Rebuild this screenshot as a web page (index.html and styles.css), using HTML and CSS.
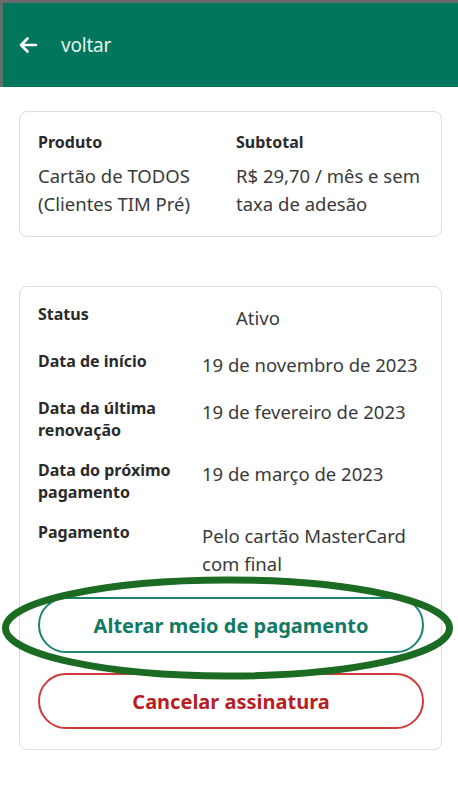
FILE: index.html
```html
<!DOCTYPE html>
<html lang="pt-BR">
<head>
<meta charset="utf-8">
<title>Assinatura</title>
<link rel="stylesheet" href="styles.css">
</head>
<body>
<div class="frame">
  <header class="topbar">
    <svg class="back" width="20" height="18" viewBox="0 0 20 18" aria-hidden="true">
      <path d="M18 9H3M9.5 2.5L3 9l6.5 6.5" fill="none" stroke="#ffffff" stroke-width="2.6" stroke-linecap="round" stroke-linejoin="round"/>
    </svg>
    <span class="back-label">voltar</span>
  </header>

  <main class="content">
    <section class="card summary">
      <div class="col">
        <div class="label">Produto</div>
        <div class="value">Cartão de TODOS<br>(Clientes TIM Pré)</div>
      </div>
      <div class="col">
        <div class="label">Subtotal</div>
        <div class="value">R$ 29,70 / mês e sem<br>taxa de adesão</div>
      </div>
    </section>

    <section class="card details">
      <div class="row status">
        <div class="label">Status</div>
        <div class="value">Ativo</div>
      </div>
      <div class="row">
        <div class="label">Data de início</div>
        <div class="value">19 de novembro de 2023</div>
      </div>
      <div class="row">
        <div class="label">Data da última<br>renovação</div>
        <div class="value">19 de fevereiro de 2023</div>
      </div>
      <div class="row">
        <div class="label">Data do próximo<br>pagamento</div>
        <div class="value">19 de março de 2023</div>
      </div>
      <div class="row last">
        <div class="label">Pagamento</div>
        <div class="value">Pelo cartão MasterCard<br>com final</div>
      </div>

      <div class="actions">
        <button class="btn btn-primary">Alterar meio de pagamento</button>
        <button class="btn btn-danger">Cancelar assinatura</button>
      </div>
    </section>
    <div class="next-card"></div>
  </main>

  <svg class="highlight" width="458" height="110" viewBox="0 0 458 110" aria-hidden="true">
    <ellipse cx="227.5" cy="54" rx="222" ry="48" fill="none" stroke="#1b6c22" stroke-width="7"/>
  </svg>
</div>
</body>
</html>
```

FILE: styles.css
```css
* { box-sizing: border-box; }
html, body { margin: 0; padding: 0; background: #ffffff; }
body {
  font-family: "Noto Sans", "Open Sans", sans-serif;
  color: #2b2b2b;
  width: 458px;
  height: 792px;
  overflow: hidden;
}
.frame {
  position: relative;
  width: 458px;
  height: 792px;
  border-top: 3px solid #6b6b6b;
}
.topbar {
  height: 84px;
  background: #00765c;
  display: flex;
  align-items: center;
  padding-left: 18px;
  gap: 23px;
  border-left: 3px solid #5f6f69;
}
.back { display: block; margin-left: -3px; }
.back-label {
  color: #e6f2ed;
  font-size: 19px;
  letter-spacing: -0.2px;
}
.content {
  padding: 24px 16px 0 19px;
  display: flex;
  flex-direction: column;
  gap: 49px;
}
.card {
  border: 1.5px solid #dcdce2;
  border-radius: 8px;
  background: #fff;
}
.summary {
  height: 126px;
  display: grid;
  grid-template-columns: 198px 1fr;
  padding: 19px 8px 0 18px;
}
.summary .label {
  font-weight: 700;
  font-size: 16px;
  line-height: 22px;
  color: #2a2a2a;
  margin-bottom: 9px;
}
.summary .value {
  font-size: 18.5px;
  line-height: 28px;
  color: #3a3a3a;
  white-space: nowrap;
}
.details {
  height: 464px;
  padding: 17px 14px 0 18px;
  display: flex;
  flex-direction: column;
}
.row {
  display: grid;
  grid-template-columns: 164px 1fr;
  margin-bottom: 19px;
  flex: none;
}
.row .label {
  font-weight: 700;
  font-size: 16px;
  line-height: 21.5px;
  color: #2a2a2a;
  white-space: nowrap;
}
.row .value {
  font-size: 18.5px;
  line-height: 28px;
  color: #3a3a3a;
  white-space: nowrap;
}
.row.status .value { padding-left: 34px; }
.row.last { margin-bottom: 0; }
.actions {
  margin-top: 19px;
  display: flex;
  flex-direction: column;
  gap: 20px;
  flex: none;
}
.btn {
  height: 56px;
  border-radius: 28px;
  background: #fff;
  font-family: "Noto Sans", "Open Sans", sans-serif;
  font-weight: 700;
  font-size: 20px;
  letter-spacing: 0;
  width: 386px;
  flex: none;
}
.btn-primary {
  border: 2px solid #1b8270;
  color: #137a62;
}
.btn-danger {
  border: 2px solid #cf3a3a;
  color: #b81e23;
}
.next-card {
  height: 6px;
  border-top: 1px solid #f0f0f3;
  margin: -7px 12px 0 12px;
}
.highlight {
  position: absolute;
  left: 0;
  top: 571px;
}
```
